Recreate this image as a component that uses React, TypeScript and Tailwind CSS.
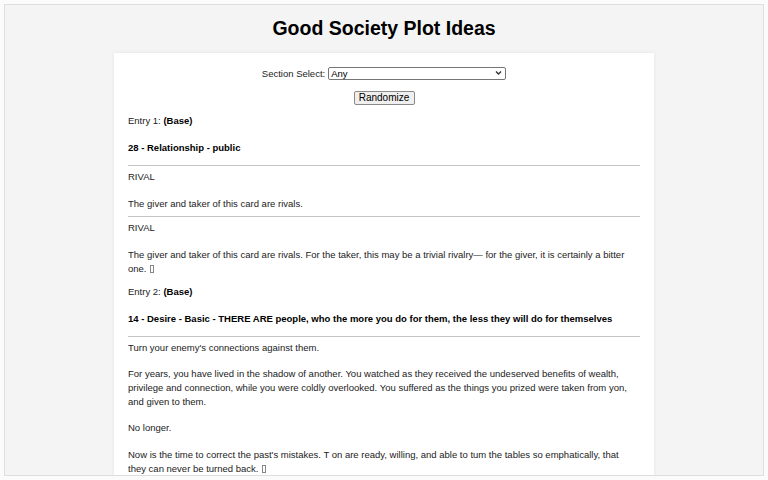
import React from "react";

function Tofu() {
  return (
    <span className="inline-block w-[4px] h-[8px] border border-[#888] align-[-1px] ml-[1px]" />
  );
}

function Hr({ mt }: { mt: string }) {
  return <div className={`${mt} border-t border-[#c4c4c4] h-0`} />;
}

export default function App() {
  return (
    <div className="w-[768px] h-[480px] bg-[#fbfbfb] p-[4px] overflow-hidden" style={{ fontFamily: '"Liberation Sans", Arial, sans-serif' }}>
      <div className="h-[472px] border border-[#dedede] bg-[#f4f4f4] overflow-hidden flex flex-col items-center">
        <h1 className="mt-[11px] text-[19.5px] leading-[24px] font-bold text-black">Good Society Plot Ideas</h1>
        <div className="mt-[13px] w-[540px] flex-1 bg-white shadow-[0_0_3px_rgba(0,0,0,0.08)] px-[14px] pt-[14px] text-[9.5px] leading-[14px] text-[#222]">
          <div className="flex justify-center items-center gap-[3px] h-[13px]">
            <span>Section Select:</span>
            <div className="relative w-[178px] h-[13px]">
              <select className="appearance-none w-full h-full border border-[#767676] rounded-[2px] bg-white text-[9.5px] leading-[11px] pl-[2px] text-black">
                <option>Any</option>
              </select>
              <svg className="absolute right-[4px] top-[3px] pointer-events-none" width="7" height="6" viewBox="0 0 7 6">
                <path d="M1 1.5 L3.5 4 L6 1.5" stroke="#333" strokeWidth="1.4" fill="none" />
              </svg>
            </div>
          </div>
          <div className="flex justify-center mt-[11px]">
            <button className="w-[61px] h-[14px] border border-[#8a8a8a] rounded-[2px] bg-[#efefef] text-[10px] leading-[12px] text-black">Randomize</button>
          </div>

          <p className="mt-[9px]">Entry 1: <b className="text-black">(Base)</b></p>
          <p className="mt-[13px] font-bold text-black">28 - Relationship - public</p>
          <Hr mt="mt-[10px]" />
          <p className="mt-[4px]">RIVAL</p>
          <p className="mt-[13px]">The giver and taker of this card are rivals.</p>
          <Hr mt="mt-[5px]" />
          <p className="mt-[4px]">RIVAL</p>
          <p className="mt-[13px] pr-[4px]">The giver and taker of this card are rivals. For the taker, this may be a trivial rivalry— for the giver, it is certainly a bitter one. <Tofu /></p>

          <p className="mt-[9px]">Entry 2: <b className="text-black">(Base)</b></p>
          <p className="mt-[13px] font-bold text-black">14 - Desire - Basic - THERE ARE people, who the more you do for them, the less they will do for themselves</p>
          <Hr mt="mt-[10px]" />
          <p className="mt-[4px]">Turn your enemy's connections against them.</p>
          <p className="mt-[12px] pr-[4px]">For years, you have lived in the shadow of another. You watched as they received the undeserved benefits of wealth, privilege and connection, while you were coldly overlooked. You suffered as the things you prized were taken from yon, and given to them.</p>
          <p className="mt-[12px]">No longer.</p>
          <p className="mt-[13px] pr-[4px]">Now is the time to correct the past's mistakes. T on are ready, willing, and able to tum the tables so emphatically, that they can never be turned back. <Tofu /></p>
        </div>
      </div>
    </div>
  );
}
